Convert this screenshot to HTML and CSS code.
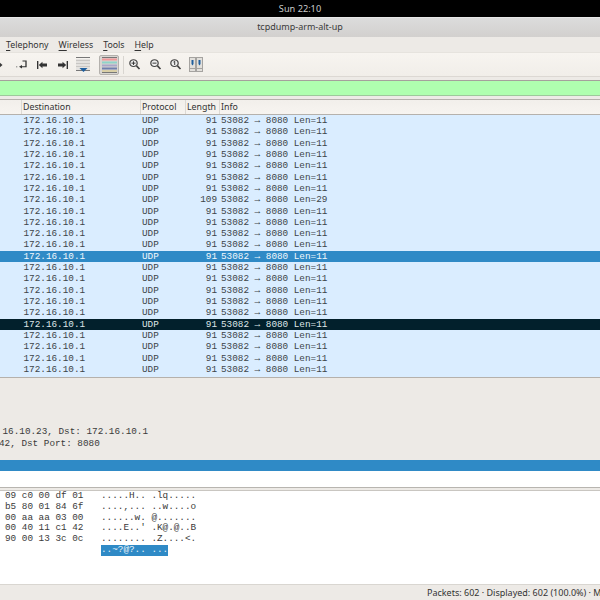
FILE: index.html
```html
<!DOCTYPE html>
<html lang="en">
<head>
<meta charset="utf-8">
<title>tcpdump-arm-alt-up</title>
<link rel="stylesheet" href="styles.css">
</head>
<body>
<div class="app">
  <div class="topbar">Sun 22:10</div>
  <div class="titlebar">tcpdump-arm-alt-up</div>
  <div class="menubar">
    <span><u>T</u>elephony</span><span><u>W</u>ireless</span><span><u>T</u>ools</span><span><u>H</u>elp</span>
  </div>
  <div class="toolbar">
    <svg class="ic i-play" width="5" height="10" viewBox="0 0 5 10"><path d="M0 1l4.500 4-4.500 4z" fill="#3b3b3b"/></svg>
    <svg class="ic i-jump" width="12" height="10" viewBox="0 0 12 14" preserveAspectRatio="none"><path d="M6.500 1.500h3.500v8h-5" fill="none" stroke="#333" stroke-width="1.300"/><path d="M6 7l-3 2.500 3 2.500z" fill="#333"/><path d="M0 9h1.300v1.200H0z" fill="#555"/></svg>
    <svg class="ic i-first" width="10" height="8" viewBox="0 0 11 10" preserveAspectRatio="none"><path d="M0 0h1.500v10H0z" fill="#333"/><path d="M2 5l4-4v2h5v4H6v2z" fill="#333"/></svg>
    <svg class="ic i-last" width="10" height="8" viewBox="0 0 11 10" preserveAspectRatio="none"><path d="M9.500 0H11v10H9.500z" fill="#333"/><path d="M9 5L5 1v2H0v4h5v2z" fill="#333"/></svg>
    <svg class="ic i-auto" width="15" height="16" viewBox="0 0 15 16"><path d="M0 .5h14M0 13.500h14" stroke="#777" fill="none"/><path d="M0 2h14v11H0z" fill="#e4e2df"/><path d="M0 3.500h14M0 6.500h14M0 9.500h14" stroke="#c9c7c4" fill="none"/><path d="M3.500 11h8L7.500 15z" fill="#1f5f9e"/></svg>
    <div class="toggle">
      <svg width="15" height="16" viewBox="0 0 15 16"><path d="M0 .5h15" stroke="#777"/><path d="M0 2.500h15" stroke="#f0989a" stroke-width="2"/><path d="M0 5.500h15" stroke="#8fd3c8" stroke-width="2"/><path d="M0 8.500h15" stroke="#a9a6c9" stroke-width="2"/><path d="M0 11.500h15" stroke="#6f7fae" stroke-width="2"/><path d="M0 14h15" stroke="#d9c77a" stroke-width="1"/><path d="M0 15.500h15" stroke="#777"/></svg>
    </div>
    <div class="sep"></div>
    <svg class="ic i-zin" width="11" height="11" viewBox="0 0 11 12" preserveAspectRatio="none"><circle cx="4.500" cy="4.500" r="3.700" fill="#eee" stroke="#444" stroke-width="1.200"/><path d="M7.500 7.500l3 3.500" stroke="#444" stroke-width="1.700"/><path d="M2.500 4.500h4M4.500 2.500v4" stroke="#333"/></svg>
    <svg class="ic i-zout" width="11" height="11" viewBox="0 0 11 12" preserveAspectRatio="none"><circle cx="4.500" cy="4.500" r="3.700" fill="#eee" stroke="#444" stroke-width="1.200"/><path d="M7.500 7.500l3 3.500" stroke="#444" stroke-width="1.700"/><path d="M2.500 4.500h4" stroke="#333"/></svg>
    <svg class="ic i-zres" width="11" height="11" viewBox="0 0 11 12" preserveAspectRatio="none"><circle cx="4.500" cy="4.500" r="3.700" fill="#eee" stroke="#444" stroke-width="1.200"/><path d="M7.500 7.500l3 3.500" stroke="#444" stroke-width="1.700"/><path d="M3.500 3.300l1.200-.8v4" stroke="#333" fill="none"/></svg>
    <svg class="ic i-cols" width="14" height="15" viewBox="0 0 14 15"><path d="M0 0h14v15H0z" fill="#e2e0dc"/><path d="M0 .5h14M0 11.500h14M0 14.500h14M.5 0v15M6.500 0v15M7.500 0v15M13.500 0v15" stroke="#a5a3a0" fill="none"/><path d="M2.500 3h2v4l-1 1.500-1-1.500zM9.500 3h2v4l-1 1.500-1-1.500z" fill="#1f5f9e"/></svg>
  </div>
  <div class="filterwrap"><div class="filter"></div></div>
  <div class="listhead">
    <span class="c-dst">Destination</span><span class="c-pro">Protocol</span><span class="c-len">Length</span><span class="c-inf">Info</span>
  </div>
  <div class="list" id="list"></div>
  <div class="details">
    <div class="d-line d-a">16.10.23, Dst: 172.16.10.1</div>
    <div class="d-line d-b">42, Dst Port: 8080</div>
    <div class="d-sel"></div>
    <div class="d-white"></div>
  </div>
  <div class="hex">
    <div class="h-row"><span class="h-b">09 c0 00 df 01</span><span class="h-a">.....H.. .lq.....</span></div>
    <div class="h-row"><span class="h-b">b5 80 01 84 6f</span><span class="h-a">....,... ..w....o</span></div>
    <div class="h-row"><span class="h-b">00 aa aa 03 00</span><span class="h-a">......w. @.......</span></div>
    <div class="h-row"><span class="h-b">00 40 11 c1 42</span><span class="h-a">....E..' .K@.@..B</span></div>
    <div class="h-row"><span class="h-b">90 00 13 3c 0c</span><span class="h-a">........ .Z....&lt;.</span></div>
    <div class="h-row"><span class="h-b"></span><span class="h-a h-sel">..~?@?.. ...</span></div>
  </div>
  <div class="status"><span class="st-text">Packets: 602 · Displayed: 602 (100.0%) · M</span></div>
</div>
<script src="app.js"></script>
</body>
</html>
```
FILE: app.js
```js
var rows = document.getElementById('list');
for (var i = 0; i < 23; i++) {
  var big = i === 7;
  var cls = i === 12 ? ' sel' : i === 18 ? ' dark' : '';
  rows.insertAdjacentHTML('beforeend',
    '<div class="row' + cls + '"><span class="c-dst">172.16.10.1</span><span class="c-pro">UDP</span>' +
    '<span class="c-len">' + (big ? '109' : '91') + '</span><span class="c-inf">53082 → 8080 Len=' + (big ? '29' : '11') + '</span></div>');
}
```
FILE: styles.css
```css
* { box-sizing: border-box; }
html, body { margin: 0; padding: 0; }
body { width: 600px; height: 600px; overflow: hidden; font-family: "Noto Sans", "Open Sans", sans-serif; color: #2e3436; }
.app { width: 600px; height: 600px; display: flex; flex-direction: column; background: #edeae6; overflow: hidden; }

.topbar { height: 17px; background: #000; color: #c9c9c9; font-size: 9.200px; line-height: 17px; text-align: center; flex: none; }
.titlebar { height: 20px; background: linear-gradient(#dcdcdc, #d2d0ce); color: #3a3a3a; font-size: 9px; line-height: 18px; text-align: center; flex: none; border-top: 1px solid #e8e8e8; }

.menubar { height: 15px; flex: none; display: flex; gap: 10px; padding-left: 6px; padding-top: 1px; font-size: 8.800px; line-height: 15px; background: #edeae6; color: #333; }
.menubar u { text-underline-offset: 2px; }

.toolbar { height: 25px; flex: none; display: flex; align-items: center; background: linear-gradient(#f7f4f0, #f1eee9); border-top: 1px solid #e6e3de; border-bottom: 1px solid #dcd8d3; }
.ic { flex: none; display: block; }
.i-play { margin-left: -2px; }
.i-jump { margin-left: 13px; }
.i-first { margin-left: 9px; }
.i-last { margin-left: 11px; }
.i-auto { margin-left: 8px; }
.toggle { flex: none; width: 20px; height: 20px; margin-left: 8px; display: flex; align-items: center; justify-content: center; background: #d9d6d2; border: 1px solid #b4b1ad; border-radius: 2px; }
.sep { flex: none; width: 1px; height: 18px; margin-left: 4px; background: #d8d5d0; }
.i-zin { margin-left: 5px; }
.i-zout { margin-left: 10px; }
.i-zres { margin-left: 9px; }
.i-cols { margin-left: 8px; }

.filterwrap { height: 22px; flex: none; padding: 3px 0; background: #edeae6; }
.filter { height: 16px; background: #afffaf; border-top: 1px solid #a5a19c; border-bottom: 1px solid #9dc99b; }

.listhead { height: 16px; flex: none; display: flex; font-size: 8.800px; line-height: 15px; background: linear-gradient(#f2efeb, #f7f4f0); border-top: 1px solid #b5b1ac; border-bottom: 1px solid #b5b1ac; color: #333; }
.listhead span { border-left: 1px solid #dcd9d4; padding-left: 1px; }

.c-dst { width: 119px; margin-left: 21px; flex: none; }
.c-pro { width: 45px; flex: none; }
.c-len { width: 34px; flex: none; }
.c-inf { flex: none; }

.list { height: 263px; flex: none; background: #daedff; border-bottom: 1px solid #b5b1ac; font-family: "Liberation Mono", monospace; font-size: 9.340px; color: #3c4448; }
.row { height: 11.320px; line-height: 11.320px; display: flex; white-space: pre; }
.row .c-dst { padding-left: 2.500px; }
.row .c-pro { padding-left: 2px; }
.row .c-len { text-align: right; padding-right: 2px; }
.row .c-inf { padding-left: 2px; }
.row.sel { background: #2f8ac6; color: #f2f8fc; }
.row.dark { background: #02202c; color: #dfe6e8; }

.details { height: 107px; flex: none; margin-top: 3px; display: flex; flex-direction: column; font-family: "Liberation Mono", monospace; font-size: 9.340px; color: #3a3a3a; background: #edeae6; border-bottom: 1px solid #b8b5b0; }
.d-line { height: 11px; line-height: 11px; white-space: pre; }
.d-a { margin-top: 45px; padding-left: 2.500px; }
.d-b { margin-top: 0.500px; margin-left: -1px; }
.d-sel { height: 11px; flex: none; background: #2f8ac6; margin-top: 11.500px; }
.d-white { flex: 1; background: #fff; }

.hex { height: 94px; flex: none; margin-top: 2px; background: #fff; border-top: 1px solid #c9c6c1; font-family: "Liberation Mono", monospace; font-size: 9.340px; color: #3a3a3a; }
.h-row { height: 10.800px; line-height: 10.800px; display: flex; white-space: pre; padding-left: 5px; }
.h-b { width: 96px; flex: none; }
.h-sel { background: #2f8ac6; color: #e8f2f9; }

.status { flex: 1; display: flex; align-items: center; background: #edeae6; border-top: 1px solid #d9d6d1; font-size: 9px; color: #333; white-space: pre; padding-left: 427px; }
```
